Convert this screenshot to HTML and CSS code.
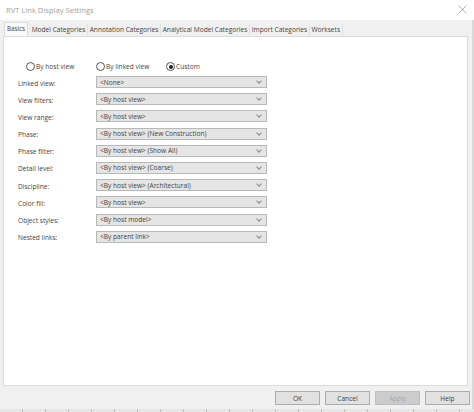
FILE: index.html
```html
<!DOCTYPE html>
<html>
<head>
<meta charset="utf-8">
<link rel="stylesheet" href="styles.css">
</head>
<body>
<div class="dialog">
  <div class="titlebar">
    <span class="title">RVT Link Display Settings</span>
    <svg class="close" width="9" height="9" viewBox="0 0 9 9"><path d="M0.5 0.5 L8.5 8.5 M8.5 0.5 L0.5 8.5" stroke="#9a9a9a" stroke-width="0.8" fill="none"/></svg>
  </div>
  <div class="body">
    <div class="tabs">
      <div class="tab active">Basics</div>
      <div class="tab">Model Categories</div>
      <div class="tab">Annotation Categories</div>
      <div class="tab">Analytical Model Categories</div>
      <div class="tab">Import Categories</div>
      <div class="tab">Worksets</div>
    </div>
    <div class="panel">
      <div class="radios">
        <label class="radio"><span class="circle"></span>By host view</label>
        <label class="radio"><span class="circle"></span>By linked view</label>
        <label class="radio"><span class="circle checked"></span>Custom</label>
      </div>
      <div class="form">
        <div class="lbl">Linked view:</div><div class="select"><span>&lt;None&gt;</span><i class="chev"></i></div>
        <div class="lbl">View filters:</div><div class="select"><span>&lt;By host view&gt;</span><i class="chev"></i></div>
        <div class="lbl">View range:</div><div class="select"><span>&lt;By host view&gt;</span><i class="chev"></i></div>
        <div class="lbl">Phase:</div><div class="select"><span>&lt;By host view&gt; (New Construction)</span><i class="chev"></i></div>
        <div class="lbl">Phase filter:</div><div class="select"><span>&lt;By host view&gt; (Show All)</span><i class="chev"></i></div>
        <div class="lbl">Detail level:</div><div class="select"><span>&lt;By host view&gt; (Coarse)</span><i class="chev"></i></div>
        <div class="lbl">Discipline:</div><div class="select"><span>&lt;By host view&gt; (Architectural)</span><i class="chev"></i></div>
        <div class="lbl">Color fill:</div><div class="select"><span>&lt;By host view&gt;</span><i class="chev"></i></div>
        <div class="lbl">Object styles:</div><div class="select"><span>&lt;By host model&gt;</span><i class="chev"></i></div>
        <div class="lbl">Nested links:</div><div class="select"><span>&lt;By parent link&gt;</span><i class="chev"></i></div>
      </div>
    </div>
    <div class="footer">
      <div class="btn">OK</div>
      <div class="btn">Cancel</div>
      <div class="btn disabled">Apply</div>
      <div class="btn">Help</div>
    </div>
  </div>
  <div class="strip"></div>
</div>
</body>
</html>
```
FILE: styles.css
```css
* { box-sizing: border-box; }
html, body { margin: 0; padding: 0; }
body {
  width: 474px;
  height: 412px;
  overflow: hidden;
  background: #ffffff;
  font-family: "Open Sans", "Noto Sans", "DejaVu Sans", sans-serif;
  font-size: 6.6px;
  color: #444;
}
.dialog { display: flex; flex-direction: column; height: 412px; }
.titlebar {
  height: 20px;
  background: #fff;
  display: flex;
  align-items: center;
  justify-content: space-between;
  padding: 0 7px 1px 6px;
}
.title { color: #a0a0a0; font-size: 7.6px; }
.close { display: block; }
.body {
  flex: 1;
  background: #f0f0f0;
  display: flex;
  flex-direction: column;
  border-right: 2px solid #d8d8d8;
}
.tabs {
  height: 16px;
  display: flex;
  align-items: flex-end;
  padding-left: 5px;
}
.tab {
  height: 12px;
  line-height: 11px;
  padding: 0 1.6px 0 1.8px;
  color: #444;
  border-right: 1px solid #e0e0e0;
}
.tab.active {
  height: 14px;
  line-height: 12px;
  background: #fafafa;
  border: 1px solid #dcdcdc;
  border-bottom: none;
  padding: 0 2px 0 2px;
  margin-left: -1px;
  margin-right: 2px;
  font-size: 6.2px;
}
.panel {
  height: 350px;
  margin: 0 4px 0 3px;
  background: #fff;
  border: 1px solid #dcdcdc;
  padding: 25px 0 0 14px;
}
.radios {
  display: flex;
  padding-left: 8px;
  margin-bottom: 5px;
}
.radio {
  width: 70px;
  display: flex;
  align-items: center;
  gap: 1px;
  color: #444;
  font-size: 6.6px;
}
.circle {
  width: 9px;
  height: 9px;
  border: 1px solid #555;
  border-radius: 50%;
  background: #fff;
  display: inline-flex;
  align-items: center;
  justify-content: center;
}
.circle.checked::after {
  content: "";
  width: 4px;
  height: 4px;
  border-radius: 50%;
  background: #222;
}
.form {
  display: grid;
  grid-template-columns: 78px 171px;
  grid-auto-rows: 12px;
  row-gap: 5.2px;
  align-items: center;
}
.lbl { padding-top: 2px; color: #444; }
.select {
  height: 12px;
  background: #e5e5e5;
  border: 1px solid #b8b8b8;
  display: flex;
  align-items: center;
  justify-content: space-between;
  padding: 0 3px 0 3px;
  color: #444;
}
.chev {
  width: 4px;
  height: 4px;
  border-right: 1px solid #8a8a8a;
  border-bottom: 1px solid #8a8a8a;
  transform: rotate(45deg);
  margin: -2px 2px 0 0;
}
.footer {
  flex: 1;
  display: flex;
  justify-content: flex-end;
  align-items: flex-start;
  gap: 5px;
  padding: 5px 2px 0 0;
}
.btn {
  width: 45px;
  height: 14px;
  background: #e1e1e1;
  border: 1px solid #adadad;
  display: flex;
  align-items: center;
  justify-content: center;
  color: #444;
}
.btn.disabled {
  background: #cccccc;
  border-color: #bfbfbf;
  color: #a8a8a8;
}
.strip {
  height: 3px;
  background: repeating-linear-gradient(90deg, #e6e6e6 0, #e6e6e6 22px, #bdbdbd 22px, #bdbdbd 23px);
}
```
